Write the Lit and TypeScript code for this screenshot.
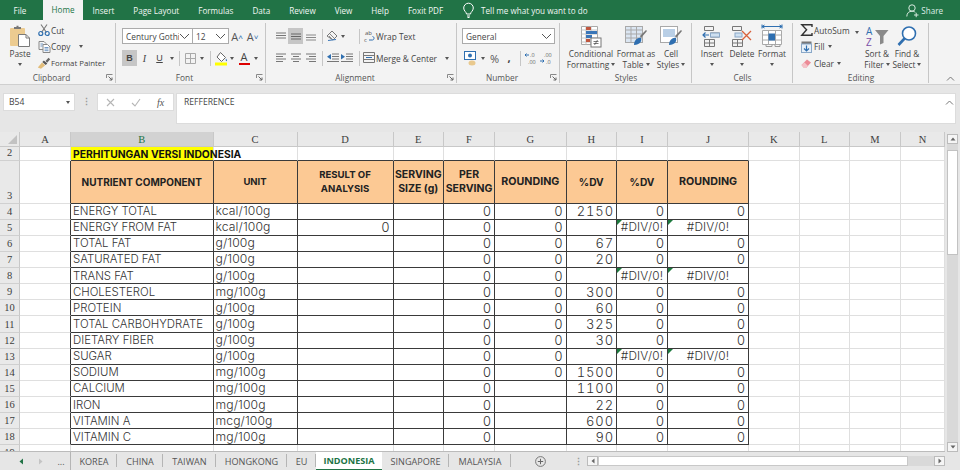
import { LitElement, html, css } from "lit";
import { customElement } from "lit/decorators.js";

const sl = (w: number, c: unknown = "", cls = "") => html`<span class="slot ${cls}" style="width:${w}px">${c}</span>`;
const car = html`<i class="car"></i>`;
const sep = html`<i class="sep"></i>`;

const ic = {
  paste: html`<svg width="22" height="22" viewBox="0 0 22 22"><rect x="1" y="3" width="15" height="18" rx="1" fill="#eccb90"/><path d="M5 4V2h2.5V.8h2V2H12v2z" fill="#777"/><path d="M9.5 9.5H17l3.5 3.5v8.500H9.500z" fill="#fff" stroke="#7a7a7a"/><path d="M17 9.500V13h3.500" fill="none" stroke="#7a7a7a"/></svg>`,
  cut: html`<svg width="12" height="12" viewBox="0 0 12 12"><path d="M3 .5l5.500 8M9 .5L3.500 8.500" stroke="#777" stroke-width="1.100" fill="none"/><circle cx="2.800" cy="9.500" r="2" fill="none" stroke="#2f6fb0" stroke-width="1.200"/><circle cx="9.200" cy="9.500" r="2" fill="none" stroke="#2f6fb0" stroke-width="1.200"/></svg>`,
  copy: html`<svg width="13" height="12" viewBox="0 0 13 12"><path d="M1 .5h5l2 2v6H1z" fill="#f5f5f5" stroke="#888"/><path d="M5 3.500h4.500l2.500 2.500v5.500H5z" fill="#fff" stroke="#888"/><path d="M6.500 6.500h4M6.500 8h4M6.500 9.700h4M2.500 3h2.500M2.500 5h2" stroke="#6f97c4"/></svg>`,
  painter: html`<svg width="14" height="12" viewBox="0 0 14 12"><path d="M.8 10.500l4.200-5 3.200 2.800L4 11.700z" fill="#e2bd7a"/><path d="M5.300 5l3.400 3 1.600-1.600-3.400-3z" fill="#555"/><path d="M8.500 4L11.500.8l1.700 1.500-3 3.400z" fill="#666"/></svg>`,
  border: html`<svg width="13" height="13" viewBox="0 0 13 13"><path d="M1.500 1.500h10v10h-10zM6.500 1.500v10M1.500 6.500h10" fill="none" stroke="#a9a9a9"/></svg>`,
  fill: html`<svg width="13" height="15" viewBox="0 0 13 15"><path d="M5.500 1.500l5 5-4 4-4.500-4.500z" fill="#fff" stroke="#666"/><path d="M11 7.500c1 1.300 1.300 2.300.6 2.800-.8 0-1.200-1-.6-2.800z" fill="#2f6fb0"/><rect x="0" y="11.500" width="12" height="3" fill="#ffff00"/></svg>`,
  alTop: html`<svg width="10" height="9" viewBox="0 0 10 9"><path d="M0 1h10M0 3.500h10M0 6h10" stroke="#777" fill="none"/></svg>`,
  alMid: html`<svg width="10" height="9" viewBox="0 0 10 9"><path d="M0 2h10M0 4.500h10M0 7h10" stroke="#666" fill="none"/></svg>`,
  alBot: html`<svg width="10" height="9" viewBox="0 0 10 9"><path d="M0 3h10M0 5.500h10M0 8h10" stroke="#888" fill="none"/></svg>`,
  left: html`<svg width="10" height="11" viewBox="0 0 10 11"><path d="M0 1h10M0 3.500h7M0 6h10M0 8.500h7" stroke="#777" fill="none"/></svg>`,
  center: html`<svg width="10" height="11" viewBox="0 0 10 11"><path d="M0 1h10M2 3.500h6M0 6h10M2 8.500h6" stroke="#777" fill="none"/></svg>`,
  right: html`<svg width="10" height="11" viewBox="0 0 10 11"><path d="M0 1h10M3 3.500h7M0 6h10M3 8.500h7" stroke="#777" fill="none"/></svg>`,
  orient: html`<svg width="12" height="12" viewBox="0 0 12 12"><path d="M1 6L6 1l5 5-4 4z" fill="none" stroke="#777"/><path d="M2 10.500l8-1" stroke="#3a76b8" stroke-width="1.200"/><path d="M4 4l4 4M3 6l3 3" stroke="#888"/></svg>`,
  wrap: html`<svg width="11" height="14" viewBox="0 0 11 14"><text x="1" y="6" font-size="6" fill="#555" font-family="Open Sans">ab</text><text x="0" y="13" font-size="6" fill="#555" font-family="Open Sans">c</text><path d="M5 11h3.500c2 0 2-3.500 0-3.500" fill="none" stroke="#2f6fb0"/></svg>`,
  indL: html`<svg width="12" height="10" viewBox="0 0 12 10"><path d="M5 1h7M5 3.500h7M5 6h7M0 8.500h12" stroke="#777" fill="none"/><path d="M0 3.700L4 1v5.500z" fill="#2f6fb0"/></svg>`,
  indR: html`<svg width="12" height="10" viewBox="0 0 12 10"><path d="M5 1h7M5 3.500h7M5 6h7M0 8.500h12" stroke="#777" fill="none"/><path d="M4 3.700L0 1v5.500z" fill="#2f6fb0"/></svg>`,
  merge: html`<svg width="12" height="12" viewBox="0 0 12 12"><path d="M.5.500h11v10H.500zM.500 3.500h11M.500 7.500h11" fill="none" stroke="#777"/><path d="M3 5.500h6" stroke="#2f6fb0"/></svg>`,
  money: html`<svg width="13" height="15" viewBox="0 0 13 15"><rect x=".5" y=".5" width="11" height="8" fill="#fff" stroke="#2f6fb0"/><circle cx="6" cy="4.500" r="2" fill="#2f6fb0"/><ellipse cx="8" cy="12" rx="3.500" ry="2.500" fill="#e9c98e"/></svg>`,
  incD: html`<svg width="14" height="12" viewBox="0 0 14 12"><text x="5" y="5" font-size="5.500" fill="#666" font-family="Open Sans">.0</text><text x="3" y="11.500" font-size="5.500" fill="#666" font-family="Open Sans">.00</text><path d="M4 3H0M1.500 1.500L0 3l1.500 1.500" stroke="#2f6fb0" fill="none"/></svg>`,
  decD: html`<svg width="14" height="12" viewBox="0 0 14 12"><text x="4" y="5" font-size="5.500" fill="#666" font-family="Open Sans">.00</text><text x="6" y="11.500" font-size="5.500" fill="#666" font-family="Open Sans">.0</text><path d="M0 9h4M2.500 7.500L4 9l-1.500 1.500" stroke="#2f6fb0" fill="none"/></svg>`,
  cond: html`<svg width="24" height="23" viewBox="0 0 24 23"><path d="M2.500 1.500h16v18h-16z" fill="#fff" stroke="#a9a9a9"/><path d="M2.500 5h16M2.500 9h16M2.500 13h16M2.500 17h16M7 1.500v18M12 1.500v18" stroke="#c4c4c4" fill="none"/><rect x="7" y="2" width="5" height="3" fill="#c0563f"/><rect x="7" y="6" width="11" height="3" fill="#3a76b8"/><rect x="7" y="10" width="6" height="3" fill="#3a76b8"/><rect x="7" y="14" width="4" height="3" fill="#c0563f"/><rect x="12" y="13" width="10" height="9" fill="#fff" stroke="#777"/><path d="M14.500 16.500h5M14.500 18.500h5M18.500 15l-3 5" stroke="#555" stroke-width=".8" fill="none"/></svg>`,
  table: html`<svg width="24" height="23" viewBox="0 0 24 23"><rect x="1.500" y="1.500" width="17" height="16" fill="#dbe6f2" stroke="#a9a9a9"/><path d="M1.500 5h17M1.500 9h17M1.500 13h17M7 1.500v16M12.500 1.500v16" stroke="#a9a9a9" fill="none"/><path d="M16 11l6-6 1 1-6 7z" fill="#777"/><path d="M10 20c0-5 4-8 7-7 1 3-1 7-7 7z" fill="#2f6fb0"/></svg>`,
  styles: html`<svg width="24" height="23" viewBox="0 0 24 23"><rect x="1.500" y="1.500" width="17" height="16" fill="#fff" stroke="#a9a9a9"/><rect x="4" y="4" width="12" height="8" fill="#b9cfe6"/><path d="M16 11l6-6 1 1-6 7z" fill="#777"/><path d="M10 20c0-5 4-8 7-7 1 3-1 7-7 7z" fill="#2f6fb0"/></svg>`,
  insert: html`<svg width="20" height="23" viewBox="0 0 20 23"><path d="M2.500 1.500h9v4h-9zM2.500 14.500h10v7h-10zM7.500 14.500v7M2.500 18h10M8.500 8h9v4h-9zM13 8v4" fill="none" stroke="#777"/><rect x="8.500" y="8" width="9" height="4" fill="#cfe0f0" stroke="#8aa8c8"/><path d="M1 10h6M3.500 7.500L1 10l2.500 2.500" stroke="#2f6fb0" fill="none" stroke-width="1.200"/></svg>`,
  del: html`<svg width="22" height="23" viewBox="0 0 22 23"><path d="M1.500 1.500h9v4h-9zM1.500 14.500h10v7h-10zM6.500 14.500v7M1.500 18h10" fill="none" stroke="#777"/><rect x="4" y="8" width="7" height="4" fill="#cfe0f0" stroke="#8aa8c8"/><path d="M11 6l9 9M20 6l-9 9" stroke="#d8613c" stroke-width="1.300"/></svg>`,
  format: html`<svg width="22" height="24" viewBox="0 0 22 24"><path d="M1 2.500h20M1 .5v4M21 .5v4M5 2.500H1M3.500 1L1 2.500 3.500 4M17 2.500h4M18.500 1L21 2.500 18.500 4" stroke="#2f6fb0" fill="none"/><path d="M1.500 6.500h19v14h-19zM1.500 11h19M1.500 16h19M7.500 6.500v14M14.500 6.500v14" fill="#fff" stroke="#aaa"/><rect x="7.500" y="9.500" width="6.500" height="7" fill="#2f6fb0"/><path d="M5 20.500v2h6v-2M14 20.500v2h5v-2" fill="none" stroke="#999"/></svg>`,
  sum: html`<svg width="12" height="12" viewBox="0 0 12 12"><path d="M11 3V.8H.8l4.800 5-4.800 5.400H11V9" fill="none" stroke="#333" stroke-width="1.400"/></svg>`,
  fillD: html`<svg width="11" height="12" viewBox="0 0 11 12"><rect x=".5" y=".5" width="10" height="2.500" fill="#777"/><rect x=".5" y="3" width="10" height="8.500" fill="#e8f0f8" stroke="#8aa8c8"/><path d="M5.500 4.500v5M3 7.500l2.500 2.500L8 7.500" fill="none" stroke="#2f6fb0" stroke-width="1.200"/></svg>`,
  eraser: html`<svg width="11" height="11" viewBox="0 0 11 11"><path d="M.5 7L6 1.500 10 4.500 5 10H3z" fill="#ec8a96"/><path d="M.5 7L3.500 4.500 7 8 5 10H3z" fill="#f4c2c8"/></svg>`,
  sort: html`<svg width="23" height="24" viewBox="0 0 23 24"><text x="0" y="10.500" font-size="10" fill="#2f6fb0" font-family="Open Sans">A</text><text x="0" y="22" font-size="10" fill="#7b4fa8" font-family="Open Sans">Z</text><path d="M9 6h13.500l-5 6v7l-3.500 1.500V12z" fill="#8a8a8a"/></svg>`,
  find: html`<svg width="20" height="23" viewBox="0 0 20 23"><circle cx="12" cy="8.500" r="6.500" fill="#fff" stroke="#2f6fb0" stroke-width="1.600"/><path d="M7.500 13.500L1.500 20" stroke="#2f6fb0" stroke-width="2.600"/></svg>`,
  launch: html`<svg class="launch" width="7" height="7" viewBox="0 0 7 7"><path d="M.5 4V.5H6.500" fill="none" stroke="#888"/><path d="M2.500 2.500L6 6M6 3.500V6H3.500" fill="none" stroke="#666"/></svg>`,
  bulb: html`<svg width="11" height="15" viewBox="0 0 11 15"><path d="M3.500 11c0-2-2.800-3-2.800-6a4.800 4.800 0 0 1 9.600 0c0 3-2.800 4-2.800 6zM4 13h3M4.500 14.500h2" fill="none" stroke="#fff"/></svg>`,
  person: html`<svg width="13" height="13" viewBox="0 0 13 13"><circle cx="6" cy="4" r="3.200" fill="none" stroke="#d8eadf"/><path d="M.8 12.500c0-3.500 2.200-5.300 5.200-5.300 1.700 0 2.500.5 3.300 1.200M8 11h4.500M10.200 8.800v4.400" fill="none" stroke="#d8eadf"/></svg>`,
  plus: html`<svg width="11" height="11" viewBox="0 0 11 11"><circle cx="5.500" cy="5.500" r="4.900" fill="none" stroke="#777"/><path d="M5.500 2.800v5.400M2.800 5.500h5.400" stroke="#666"/></svg>`,
  chevD: html`<svg width="11" height="7" viewBox="0 0 11 7"><path d="M1 1l4.500 4.500L10 1" fill="none" stroke="#555"/></svg>`,
  chevU: html`<svg width="9" height="5" viewBox="0 0 9 5"><path d="M1 4.500L4.500 1 8 4.500" fill="none" stroke="#777"/></svg>`,
  x: html`<svg width="9" height="9" viewBox="0 0 9 9"><path d="M1 1l7 7M8 1L1 8" stroke="#b5b5b5" stroke-width="1.100"/></svg>`,
  check: html`<svg width="10" height="9" viewBox="0 0 10 9"><path d="M1 5l3 3 5-7" fill="none" stroke="#b5b5b5" stroke-width="1.100"/></svg>`,
  triL: html`<svg width="5" height="7" viewBox="0 0 5 7"><path d="M4 .5v6L.5 3.500z" fill="#217346"/></svg>`,
  triR: html`<svg width="5" height="7" viewBox="0 0 5 7"><path d="M1 .5v6L4.500 3.500z" fill="#c4c4c4"/></svg>`,
  triLb: html`<svg width="4" height="6" viewBox="0 0 4 6"><path d="M3.500 .5v5L.5 3z" fill="#666"/></svg>`,
  triRb: html`<svg width="4" height="6" viewBox="0 0 4 6"><path d="M.5 .5v5L3.500 3z" fill="#666"/></svg>`,
  triUb: html`<svg width="6" height="4" viewBox="0 0 6 4"><path d="M.5 3.500h5L3 .5z" fill="#666"/></svg>`,
  triDb: html`<svg width="6" height="4" viewBox="0 0 6 4"><path d="M.5 .5h5L3 3.500z" fill="#666"/></svg>`,
};

type Row = { n: number; a: string; u: string; d?: string; g: boolean; h: string; e: boolean };
const R: Row[] = [
  { n: 4, a: "ENERGY TOTAL", u: "kcal/100g", g: true, h: "2150", e: false },
  { n: 5, a: "ENERGY FROM FAT", u: "kcal/100g", d: "0", g: true, h: "", e: true },
  { n: 6, a: "TOTAL FAT", u: "g/100g", g: true, h: "67", e: false },
  { n: 7, a: "SATURATED FAT", u: "g/100g", g: true, h: "20", e: false },
  { n: 8, a: "TRANS FAT", u: "g/100g", g: true, h: "", e: true },
  { n: 9, a: "CHOLESTEROL", u: "mg/100g", g: true, h: "300", e: false },
  { n: 10, a: "PROTEIN", u: "g/100g", g: true, h: "60", e: false },
  { n: 11, a: "TOTAL CARBOHYDRATE", u: "g/100g", g: true, h: "325", e: false },
  { n: 12, a: "DIETARY FIBER", u: "g/100g", g: true, h: "30", e: false },
  { n: 13, a: "SUGAR", u: "g/100g", g: true, h: "", e: true },
  { n: 14, a: "SODIUM", u: "mg/100g", g: true, h: "1500", e: false },
  { n: 15, a: "CALCIUM", u: "mg/100g", g: false, h: "1100", e: false },
  { n: 16, a: "IRON", u: "mg/100g", g: false, h: "22", e: false },
  { n: 17, a: "VITAMIN A", u: "mcg/100g", g: false, h: "600", e: false },
  { n: 18, a: "VITAMIN C", u: "mg/100g", g: false, h: "90", e: false },
];
const COLS = [20, 51, 142.5, 84, 96, 50.5, 51, 71.5, 50.5, 51, 81, 50.5, 50.5, 51, 44];
const ROWS = [15, 14, 42.5, ...R.map(() => 16.13), 16];
const LET = ["A", "B", "C", "D", "E", "F", "G", "H", "I", "J", "K", "L", "M", "N"];
const HEAD: { t: string[]; s: number }[] = [
  { t: ["NUTRIENT COMPONENT"], s: 10 },
  { t: ["UNIT"], s: 9.5 },
  { t: ["RESULT OF", "ANALYSIS"], s: 9.6 },
  { t: ["SERVING", "SIZE (g)"], s: 10.5 },
  { t: ["PER", "SERVING"], s: 10.5 },
  { t: ["ROUNDING"], s: 10.7 },
  { t: ["%DV"], s: 10.2 },
  { t: ["%DV"], s: 10.2 },
  { t: ["ROUNDING"], s: 10.7 },
];
const TABS: [string, number][] = [["KOREA", 47], ["CHINA", 46], ["TAIWAN", 53], ["HONGKONG", 71], ["EU", 29], ["INDONESIA", 66], ["SINGAPORE", 67], ["MALAYSIA", 62]];

@customElement("app-root")
export class AppRoot extends LitElement {
  static styles = css`
    :host { display: flex; flex-direction: column; width: 960px; height: 470px; overflow: hidden; background: #e6e6e6; font-family: "Open Sans", sans-serif; font-size: 8.3px; color: #444; }
    * { box-sizing: border-box; }
    svg { overflow: visible; flex: none; }
    .top { display: flex; height: 20px; background: #217346; color: #f2f7f4; align-items: center; flex: none; }
    .top span { padding: 0 9.5px; white-space: nowrap; font-size: 8.1px; }
    .top .file { padding: 0; width: 43px; text-align: center; padding-right: 3px; }
    .top .home { background: #f3f3f3; color: #217346; height: 20px; line-height: 20px; width: 40px; padding: 0; text-align: center; }
    .top .foxit { margin-right: 10.5px; }
    .top .bulb { padding: 0; display: flex; margin-right: 7px; }
    .top .tell { padding: 0; }
    .top .push { margin-left: auto; padding: 0; display: flex; }
    .top .share { padding: 0 17px 0 2px; color: #dfeee6; }

    .ribbon { display: flex; height: 65px; background: #f3f3f3; border-bottom: 1px solid #cfcfcf; flex: none; position: relative; }
    .group { display: flex; flex-direction: column; position: relative; height: 64px; }
    .group::after { content: ""; position: absolute; right: 0; top: 3px; bottom: 1px; width: 1px; background: #c6c6c6; }
    .body { flex: 1; display: flex; min-height: 0; }
    .label { height: 12px; line-height: 11px; text-align: center; color: #555; position: relative; flex: none; }
    .label.lg { padding-right: 13px; }
    .launch { position: absolute; right: 3px; top: 2px; }
    .slot { display: inline-flex; align-items: center; justify-content: center; flex: none; height: 100%; }
    .row { display: flex; align-items: center; white-space: nowrap; }
    .r165 { height: 16.5px; }
    .r16 { height: 16px; }
    .col { display: flex; flex-direction: column; }
    .ptop2 { padding-top: 2px; }
    .ptop8 { padding-top: 8px; }
    .gap6 { gap: 6px; }
    .pl2 { padding-left: 2px; }
    .w63 { width: 63px; }
    .big { display: flex; flex-direction: column; align-items: center; padding-top: 4px; flex: none; white-space: nowrap; }
    .ico { height: 24px; display: flex; align-items: center; justify-content: center; }
    .ln { height: 11px; line-height: 11px; display: flex; align-items: center; gap: 2px; }
    .car { display: inline-block; width: 0; height: 0; border: 2.500px solid transparent; border-top: 3px solid #555; border-bottom: 0; flex: none; }
    .sep { display: inline-block; width: 1px; height: 15px; background: #c6c6c6; }
    .box { display: flex; align-items: center; justify-content: space-between; height: 16px; background: #fff; border: 1px solid #ababab; padding: 0 2px 0 3px; flex: none; white-space: nowrap; font-size: 8.3px; }
    .box span { flex: 1; min-width: 0; overflow: hidden; }
    .fn { width: 71px; }
    .fs { width: 37px; margin-left: -1px; }
    .gen { width: 93px; }
    .sel { background: #c6c6c6; }
    .glyph { font-size: 11px; color: #555; position: relative; }
    .g-b { font-weight: 700; font-size: 9px; color: #444; font-family: "Liberation Sans", sans-serif; }
    .g-i { font-style: italic; font-size: 10px; font-family: "Liberation Serif", serif; }
    .g-u { text-decoration: underline; font-size: 9px; font-family: "Liberation Sans", sans-serif; }
    .g-a { font-size: 11px; line-height: 12px; border-bottom: 2.500px solid #d00; color: #444; width: 11px; text-align: center; font-family: "Open Sans", sans-serif; }
    .up { font-size: 8px; color: #2f6fb0; }
    .pct { font-size: 11px; color: #555; }
    .comma { font-size: 11px; color: #444; font-weight: 700; line-height: 8px; }
    .tight { font-size: 7.800px; }
    .ml { margin-left: auto; }
    .collapse { position: absolute; right: 5px; bottom: 3px; display: flex; }

    .fbar { display: flex; align-items: flex-start; height: 47px; padding: 8px 0 0 3px; background: #e6e6e6; flex: none; font-size: 8.6px; }
    .name { width: 72px; height: 18px; background: #fff; border: 1px solid #dcdcdc; display: flex; align-items: center; justify-content: space-between; padding: 0 4px 0 5px; flex: none; }
    .dots { width: 22px; height: 18px; display: flex; align-items: center; justify-content: center; color: #999; font-weight: 700; flex: none; }
    .fnbox { width: 77px; height: 18px; background: #fff; border: 1px solid #dcdcdc; display: flex; align-items: center; flex: none; }
    .fnbox .slot { height: 16px; }
    .fx { font-family: "Liberation Serif", serif; font-style: italic; font-size: 10px; color: #555; }
    .input { width: 780px; height: 31px; margin-left: 2px; background: #fff; border: 1px solid #dcdcdc; padding: 0 0 0 7px; position: relative; line-height: 17px; flex: none; }
    .input .chev { position: absolute; right: 1px; top: 6px; display: flex; }

    .sheetwrap { display: flex; height: 320px; flex: none; background: #e6e6e6; }
    .grid { display: grid; width: 945px; height: 320px; overflow: hidden; background: #fff; flex: none; align-content: start; border-bottom: 1px solid #bbb; font-family: "Inter", sans-serif; font-size: 12.2px; font-weight: 300; color: #333; }
    .corner { background: #e9e9e9; border-right: 1px solid #c8c8c8; border-bottom: 1px solid #c8c8c8; display: flex; align-items: flex-end; justify-content: flex-end; padding: 0 2px 2px 0; }
    .corner i { width: 0; height: 0; border-left: 9px solid transparent; border-bottom: 9px solid #c2c2c2; }
    .ch { background: #e9e9e9; border-right: 1px solid #c8c8c8; border-bottom: 1px solid #c8c8c8; display: flex; align-items: center; justify-content: center; font-family: "Liberation Serif", serif; font-size: 10.5px; font-weight: 400; color: #3d3d3d; }
    .ch.on { background: #d2d2d2; color: #217346; }
    .rh { background: #e9e9e9; border-right: 1px solid #c8c8c8; border-bottom: 1px solid #d0d0d0; display: flex; align-items: flex-end; justify-content: center; font-family: "Liberation Serif", serif; font-size: 10.5px; font-weight: 400; color: #3d3d3d; line-height: 14px; }
    .c { border-right: 1px solid #dfdfdf; border-bottom: 1px solid #dfdfdf; display: flex; align-items: center; white-space: nowrap; position: relative; min-width: 0; line-height: 14px; }
    .dr { border-right-color: #3a3a3a; }
    .db { border-bottom-color: #3a3a3a; }
    .txt { padding-left: 2px; letter-spacing: .1px; }
    .nm { padding-left: 2px; font-size: 11.400px; }
    .num { justify-content: flex-end; padding-right: 2px; font-size: 13px; letter-spacing: .9px; font-variant-numeric: tabular-nums; }
    .ctr { justify-content: center; }
    .div { letter-spacing: .2px; font-size: 11.800px; }
    .yel { background: #ffff00; font-weight: 700; color: #111; padding-left: 2px; font-size: 10.300px; }
    .yel span { position: relative; z-index: 1; }
    .hd { background: #fcc994; flex-direction: column; justify-content: center; text-align: center; font-weight: 700; color: #222; line-height: 14px; }
    .tri { position: absolute; left: 0; top: 0; width: 0; height: 0; border-top: 5px solid #1d7a3e; border-right: 5px solid transparent; }

    .vs { width: 15px; height: 320px; display: flex; flex-direction: column; padding: 2px 2px 0 2px; flex: none; background: #e6e6e6; }
    .vbtn { width: 11px; height: 10px; background: #f5f5f5; border: 1px solid #bbb; display: flex; align-items: center; justify-content: center; flex: none; }
    .vtrack { flex: 1; background: #d9d9d9; padding-top: 6px; }
    .vthumb { height: 105px; background: #fff; border: 1px solid #c2c2c2; }

    .tabs { display: flex; height: 18px; background: #e6e6e6; align-items: center; flex: none; font-size: 9.100px; color: #555; }
    .nav { display: flex; width: 70px; height: 18px; align-items: center; flex: none; }
    .tab { display: flex; align-items: center; justify-content: center; height: 18px; white-space: nowrap; flex: none; position: relative; }
    .tab::after { content: ""; position: absolute; right: 0; top: 2px; height: 13px; width: 1px; background: #b5b5b5; }
    .tab.first { border-left: 1px solid #b5b5b5; }
    .tab.cur { background: #fff; color: #217346; font-weight: 700; border-bottom: 1.500px solid #217346; }
    .tab.cur::after { display: none; }
    .add { width: 58px; display: flex; justify-content: center; flex: none; }
    .hdots { width: 18px; color: #999; font-weight: 700; text-align: center; flex: none; }
    .hs { display: flex; width: 358px; height: 10px; background: #d9d9d9; align-items: stretch; flex: none; }
    .hbtn { width: 11px; background: #f5f5f5; border: 1px solid #bbb; display: flex; align-items: center; justify-content: center; flex: none; }
    .hthumb { width: 310px; background: #fff; border: 1px solid #c8c8c8; flex: none; }
    .hmid { flex: 1; }
  `;

  private group(w: number, pad: number, label: string, launch: boolean, body: unknown) {
    return html`<div class="group" style="width:${w}px">
      <div class="body" style="padding-left:${pad}px">${body}</div>
      <div class="label ${launch ? "lg" : ""}">${label}${launch ? ic.launch : ""}</div>
    </div>`;
  }

  private big(w: number, icon: unknown, a: string, b: string, caret = true) {
    return html`<div class="big" style="width:${w}px"><div class="ico">${icon}</div><div class="ln">${a}</div><div class="ln">${b}${caret ? car : ""}</div></div>`;
  }

  private ribbon() {
    return html`<div class="ribbon">
      ${this.group(116, 5, "Clipboard", true, html`
        ${this.big(30, ic.paste, "Paste", "")}
        <div class="col ptop2 pl2">
          <div class="row r165">${sl(14, ic.cut)}Cut</div>
          <div class="row r165">${sl(14, ic.copy)}Copy${sl(9)}${car}</div>
          <div class="row r165">${sl(14, ic.painter)}<span class="tight">Format Painter</span></div>
        </div>`)}
      ${this.group(150, 6, "Font", true, html`
        <div class="col ptop8 gap6">
          <div class="row r16"><div class="box fn"><span>Century Gothic</span>${ic.chevD}</div><div class="box fs"><span>12</span>${ic.chevD}</div>${sl(16, html`<span class="glyph">A</span><span class="up">˄</span>`)}${sl(15, html`<span class="glyph">A</span><span class="up">˅</span>`)}</div>
          <div class="row r16">
            ${sl(15, html`<span class="g-b">B</span>`, "sel")}${sl(15, html`<span class="g-i">I</span>`)}${sl(15, html`<span class="g-u">U</span>`)}${sl(10, car)}${sl(4, sep)}${sl(18, ic.border)}${sl(6, car)}${sl(10, sep)}${sl(12, ic.fill)}${sl(10, car)}${sl(14, html`<span class="g-a">A</span>`)}${sl(10, car)}
          </div>
        </div>`)}
      ${this.group(191, 7, "Alignment", true, html`
        <div class="col ptop8 gap6">
          <div class="row r16">${sl(15, ic.alTop)}${sl(15, ic.alMid, "sel")}${sl(15, ic.alBot)}${sl(8, sep)}${sl(12, ic.orient)}${sl(10, car)}${sl(8)}${sl(6, sep)}${sl(14, ic.wrap)}<span>Wrap Text</span></div>
          <div class="row r16">${sl(15, ic.left)}${sl(15, ic.center)}${sl(15, ic.right)}${sl(8, sep)}${sl(13, ic.indL)}${sl(16, ic.indR)}${sl(1)}${sl(6, sep)}${sl(14, ic.merge)}<span>Merge &amp; Center</span>${sl(8)}${car}</div>
        </div>`)}
      ${this.group(103, 5, "Number", true, html`
        <div class="col ptop8 gap6">
          <div class="row r16"><div class="box gen"><span>General</span>${ic.chevD}</div></div>
          <div class="row r16">${sl(16, ic.money)}${sl(9, car)}${sl(15, html`<span class="pct">%</span>`)}${sl(14, html`<span class="comma">,</span>`)}${sl(8, sep)}${sl(15, ic.incD)}${sl(16, ic.decD)}</div>
        </div>`)}
      ${this.group(132, 6, "Styles", false, html`
        ${this.big(50, ic.cond, "Conditional", "Formatting")}
        ${this.big(40, ic.table, "Format as", "Table")}
        ${this.big(30, ic.styles, "Cell", "Styles")}`)}
      ${this.group(101, 5, "Cells", false, html`
        ${this.big(30, ic.insert, "Insert", "")}
        ${this.big(30, ic.del, "Delete", "")}
        ${this.big(30, ic.format, "Format", "")}`)}
      ${this.group(136, 6, "Editing", false, html`
        <div class="col ptop2 w63">
          <div class="row r165">${sl(15, ic.sum)}<span>AutoSum</span><span class="ml">${car}</span>${sl(3)}</div>
          <div class="row r165">${sl(15, ic.fillD)}<span>Fill</span>${sl(3)}${car}</div>
          <div class="row r165">${sl(15, ic.eraser)}<span>Clear</span>${sl(3)}${car}</div>
        </div>
        ${this.big(30, ic.sort, "Sort &", "Filter")}
        ${this.big(30, ic.find, "Find &", "Select")}`)}
      <div class="collapse">${ic.chevU}</div>
    </div>`;
  }

  private sheet() {
    const tmpl = `grid-template-columns:${COLS.map((c) => c + "px").join(" ")};grid-template-rows:${ROWS.map((r) => r + "px").join(" ")}`;
    const blanks = (from: number) => LET.slice(from).map(() => html`<div class="c"></div>`);
    return html`<div class="grid" style="${tmpl}">
      <div class="corner"><i></i></div>
      ${LET.map((l) => html`<div class="ch ${l === "B" ? "on" : ""}">${l}</div>`)}

      <div class="rh">2</div>
      <div class="c"></div>
      <div class="c yel db"><span>PERHITUNGAN VERSI INDONESIA</span></div>
      ${LET.slice(2, 10).map(() => html`<div class="c db"></div>`)}
      ${blanks(10)}

      <div class="rh">3</div>
      <div class="c dr"></div>
      ${HEAD.map((h) => html`<div class="c hd dr db" style="font-size:${h.s}px">${h.t.map((t) => html`<span>${t}</span>`)}</div>`)}
      ${blanks(10)}

      ${R.map((r) => html`
        <div class="rh">${r.n}</div>
        <div class="c dr"></div>
        <div class="c dr db nm">${r.a}</div>
        <div class="c dr db txt">${r.u}</div>
        <div class="c dr db num">${r.d ?? ""}</div>
        <div class="c dr db num"></div>
        <div class="c dr db num">0</div>
        <div class="c dr db num">${r.g ? "0" : ""}</div>
        <div class="c dr db num">${r.h}</div>
        ${r.e
          ? html`<div class="c dr db ctr div"><i class="tri"></i>#DIV/0!</div><div class="c dr db ctr div"><i class="tri"></i>#DIV/0!</div>`
          : html`<div class="c dr db num">0</div><div class="c dr db num">0</div>`}
        ${blanks(10)}
      `)}

      <div class="rh">19</div>
      ${blanks(0)}
    </div>`;
  }

  render() {
    return html`
      <div class="top">
        <span class="file">File</span><span class="home">Home</span>
        <span>Insert</span><span>Page Layout</span><span>Formulas</span><span>Data</span><span>Review</span><span>View</span><span>Help</span><span class="foxit">Foxit PDF</span>
        <span class="bulb">${ic.bulb}</span><span class="tell">Tell me what you want to do</span>
        <span class="push">${ic.person}</span><span class="share">Share</span>
      </div>
      ${this.ribbon()}
      <div class="fbar">
        <div class="name"><span>B54</span>${car}</div>
        <div class="dots">⋮</div>
        <div class="fnbox">${sl(25, ic.x)}${sl(25, ic.check)}${sl(25, html`<span class="fx">fx</span>`)}</div>
        <div class="input">REFFERENCE<span class="chev">${ic.chevU}</span></div>
      </div>
      <div class="sheetwrap">
        ${this.sheet()}
        <div class="vs">
          <div class="vbtn">${ic.triUb}</div>
          <div class="vtrack"><div class="vthumb"></div></div>
          <div class="vbtn">${ic.triDb}</div>
        </div>
      </div>
      <div class="tabs">
        <div class="nav">${sl(14)}${sl(14, ic.triL)}${sl(24, ic.triR)}${sl(18, "...")}</div>
        ${TABS.map(([t, w], i) => html`<div class="tab ${i === 0 ? "first" : ""} ${t === "INDONESIA" ? "cur" : ""}" style="width:${w}px">${t}</div>`)}
        <div class="add">${ic.plus}</div>
        <div class="hdots">⋮</div>
        <div class="hs"><div class="hbtn">${ic.triLb}</div><div class="hthumb"></div><div class="hmid"></div><div class="hbtn">${ic.triRb}</div></div>
      </div>
    `;
  }
}
